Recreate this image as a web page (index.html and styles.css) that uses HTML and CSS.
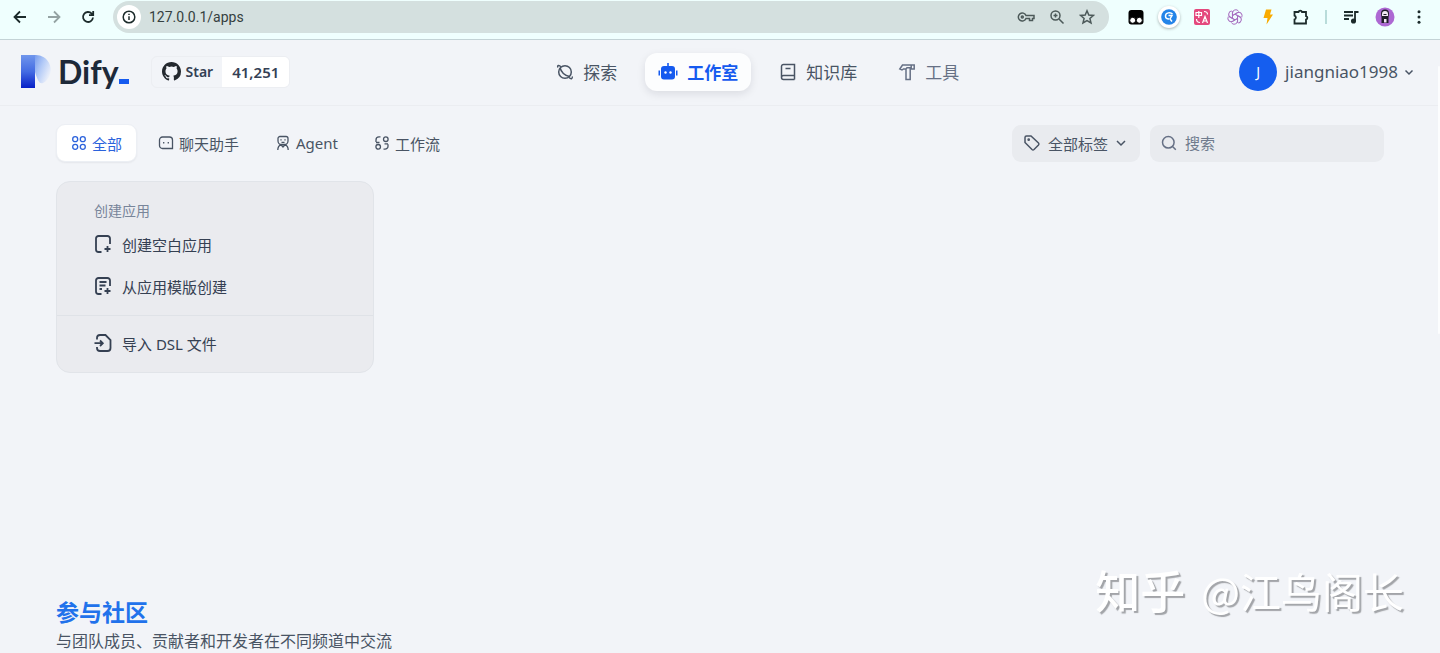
FILE: index.html
```
<!DOCTYPE html>
<html lang="zh-CN">
<head>
    <meta charset="UTF-8">
    <meta name="viewport" content="width=device-width, initial-scale=1.0">
    <title>工作室 - Dify</title>
    <link rel="stylesheet" href="styles.css">
</head>
<body>
    <!-- browser toolbar -->
    <div class="toolbar">
        <div class="nav-buttons">
            <button type="button" aria-label="Back"><svg width="16" height="16" viewBox="0 0 16 16"><path d="M14 8H3M8 2.500L2.500 8L8 13.500" /></svg></button>
            <button type="button" class="disabled" aria-label="Forward"><svg width="16" height="16" viewBox="0 0 16 16"><path d="M2 8h11M8 2.500L13.500 8L8 13.500" /></svg></button>
            <button type="button" aria-label="Reload"><svg width="16" height="16" viewBox="0 0 16 16"><path d="M13 8.500A5 5 0 1 1 11.700 4.600L13 6M13.200 2v4.200H9" /></svg></button>
        </div>
        <div class="address">
            <button type="button" class="site-info" aria-label="Site information"><svg width="16" height="16" viewBox="0 0 16 16"><circle cx="8" cy="8" r="5.800" /><path d="M8 7.300v3.700M8 4.700v1.400" /></svg></button>
            <input class="url" type="text" value="127.0.0.1/apps" aria-label="Address">
            <button type="button" aria-label="Passwords"><svg width="18" height="16" viewBox="0 0 18 16"><path d="M9 6.500h8v3h-1.500v2h-3v-2H9a4 4 0 1 1 0-3z" /><circle cx="5.300" cy="8" r="1" /></svg></button>
            <button type="button" aria-label="Zoom"><svg width="16" height="16" viewBox="0 0 16 16"><circle cx="6.500" cy="6.500" r="4.500" /><path d="M10 10l4.500 4.500M4.500 6.500h4M6.500 4.500v4" /></svg></button>
            <button type="button" aria-label="Bookmark"><svg width="16" height="16" viewBox="0 0 16 16"><path d="M8 1.800l1.800 4.200 4.600.4-3.500 3 1.100 4.500L8 11.500l-4 2.400 1.100-4.500-3.500-3 4.600-.4z" /></svg></button>
        </div>
        <div class="extensions">
            <button type="button" aria-label="Tampermonkey"><svg width="18" height="18" viewBox="0 0 18 18"><rect x="1.500" y="2" width="15" height="14.500" rx="3" fill="#000" stroke="none" /><circle cx="5.700" cy="12.300" r="3" fill="#fff" stroke="#000" stroke-width="1" /><circle cx="12.300" cy="12.300" r="3" fill="#fff" stroke="#000" stroke-width="1" /></svg></button>
            <button type="button" class="raised" aria-label="Copilot"><svg width="18" height="18" viewBox="0 0 18 18"><circle cx="9" cy="9" r="7.800" fill="#2484e8" stroke="none" /><path d="M12.500 6C10.500 3.800 5.500 4.500 5.500 8c0 2 1.500 3 3.500 3M8.500 7.500h3.500l-2 3.500 2 2.500" stroke="#fff" /></svg></button>
            <button type="button" aria-label="Translate"><svg width="18" height="18" viewBox="0 0 18 18"><rect x="1" y="1" width="16" height="16" rx="2" fill="#e4487d" stroke="none" /><path d="M3 4.500h5.500v3H3zM5.800 3v7M9.500 15l2.500-6.500 2.500 6.500M10.500 13h3M11 3.500c2.500 0 3.500 1 3.500 3M3.500 11c0 2.500 1 3.500 3.500 3.500" stroke="#fff" stroke-width="1.200" /></svg></button>
            <button type="button" aria-label="ChatGPT"><svg width="18" height="18" viewBox="0 0 18 18"><g stroke="#a76fc0" stroke-width="1"><path id="petal" d="M6.500 10.500V5a3.300 3.300 0 0 1 6.100-1.700M6.500 7.500l4.700-2.800a3 3 0 0 1 1.600-.4" /><use href="#petal" transform="rotate(60 9 9)" /><use href="#petal" transform="rotate(120 9 9)" /><use href="#petal" transform="rotate(180 9 9)" /><use href="#petal" transform="rotate(240 9 9)" /><use href="#petal" transform="rotate(300 9 9)" /></g></svg></button>
            <button type="button" aria-label="Lightning"><svg width="18" height="18" viewBox="0 0 18 18"><path d="M7 1.500h5.500l-1.500 5h3L7.500 16.500l1-6.500H4.500z" fill="#f9ab00" stroke="none" /></svg></button>
            <button type="button" aria-label="Extensions"><svg width="18" height="18" viewBox="0 0 18 18"><path d="M2.500 4h4a1.800 1.800 0 0 1 3.500 0h4v4a1.800 1.800 0 0 1 0 3.500v4h-11.500v-4a2 2 0 0 0 0-3.800z" stroke-width="1.800" /></svg></button>
            <span class="separator"></span>
            <button type="button" aria-label="Media"><svg width="18" height="18" viewBox="0 0 18 18"><path d="M2 4h9M2 7.500h9M2 11h5M13 13V4h3.500" stroke-width="1.800" /><circle cx="11.500" cy="13" r="1.800" fill="#1c2b2b" /></svg></button>
            <button type="button" aria-label="Profile"><svg width="20" height="20" viewBox="0 0 20 20"><circle cx="10" cy="10" r="9.500" fill="#ad68d3" stroke="none" /><path d="M6.500 16v-5.500L6 6.500a4 4 0 0 1 8 0l-.5 4V16z" fill="#211c2a" stroke="none" /><path d="M7 7a3 3 0 0 1 6 0v2H7zM9 12h2.500v3.500H9z" fill="#f3e8f4" stroke="none" /><path d="M8.500 7.500h3" stroke="#211c2a" stroke-width="1" /></svg></button>
            <button type="button" aria-label="Menu"><svg width="18" height="18" viewBox="0 0 18 18"><g fill="#1c2b2b" stroke="none"><circle cx="9" cy="3.800" r="1.500" /><circle cx="9" cy="9" r="1.500" /><circle cx="9" cy="14.200" r="1.500" /></g></svg></button>
        </div>
    </div>

    <header class="header">
        <div class="brand">
            <a class="logo" href="#" aria-label="Dify">
                <svg width="31" height="36" viewBox="0 0 31 36">
                    <defs>
                        <linearGradient id="stem" x1="0" y1="0" x2="0" y2="1"><stop offset="0" stop-color="#7096ec" /><stop offset="0.500" stop-color="#446ce3" /><stop offset="1" stop-color="#0720c7" /></linearGradient>
                        <linearGradient id="bowl" x1="0" y1="0" x2="1" y2="0.700"><stop offset="0" stop-color="#7399ed" /><stop offset="0.500" stop-color="#b4cbf7" /><stop offset="1" stop-color="#f0f3fa" /></linearGradient>
                    </defs>
                    <g stroke="none">
                        <path d="M14 1a15 15 0 0 1 9 28c-3 1-5-1-8-11z" fill="url(#bowl)" />
                        <path d="M1 1h14v33H1z" fill="url(#stem)" />
                    </g>
                </svg>
                <span class="logo-text">Dify<span class="cursor"></span></span>
            </a>
            <a class="github" href="#">
                <span class="star"><svg width="19" height="19" viewBox="0 0 16 16"><path d="M8 0C3.580 0 0 3.580 0 8c0 3.540 2.290 6.530 5.470 7.590.4.070.55-.17.55-.38 0-.19-.01-.82-.01-1.490-2.010.37-2.530-.49-2.690-.94-.09-.23-.48-.94-.82-1.130-.28-.15-.68-.52-.01-.53.63-.01 1.080.58 1.230.82.72 1.210 1.870.87 2.330.66.07-.52.28-.87.51-1.070-1.780-.2-3.640-.89-3.640-3.950 0-.87.31-1.590.82-2.150-.08-.2-.36-1.020.08-2.120 0 0 .67-.21 2.200.82a7.600 7.600 0 0 1 4 0c1.530-1.040 2.200-.82 2.200-.82.44 1.100.16 1.920.08 2.120.51.56.82 1.270.82 2.150 0 3.070-1.870 3.750-3.650 3.950.29.25.54.73.54 1.480 0 1.070-.01 1.930-.01 2.200 0 .21.15.46.55.38A8 8 0 0 0 16 8c0-4.420-3.580-8-8-8z" fill="#24292f" stroke="none" /></svg>Star</span>
                <span class="count">41,251</span>
            </a>
        </div>
        <nav class="main-nav">
            <a href="#"><svg width="18" height="18" viewBox="0 0 18 18"><circle cx="9" cy="9" r="6.300" /><path d="M5 3.800C3 1.800 1.200 2 1.800 4.500M4.200 5c.8 4 4.500 7.800 9.300 8.500M13 14.500c2 2 3.800 1.500 3.200-1" /></svg>探索</a>
            <a href="#" class="active"><svg width="20" height="20" viewBox="0 0 20 20"><path d="M9.200 1h1.600v3H14a3 3 0 0 1 3 3v7.500a3 3 0 0 1-3 3H6a3 3 0 0 1-3-3V7a3 3 0 0 1 3-3h3.200zM.5 8.500H2v5H.5zM18 8.500h1.500v5H18z" fill="#155aef" stroke="none" /><circle cx="7.500" cy="10.500" r="1.200" fill="#fff" stroke="none" /><circle cx="12.500" cy="10.500" r="1.200" fill="#fff" stroke="none" /></svg>工作室</a>
            <a href="#"><svg width="18" height="18" viewBox="0 0 18 18"><path d="M15.500 12.500v-11h-11a2 2 0 0 0-2 2v11a2 2 0 0 0 2 2h11M15.500 12.500h-11a2 2 0 0 0 0 4M15.500 12.500v4M6.500 5.500h5" /></svg>知识库</a>
            <a href="#" class="muted"><svg width="18" height="18" viewBox="0 0 18 18"><path d="M1.800 6L4.500 2h11.700v4h-4v10.500H8V6H5.500L4 7zM8 6l1-1.200h3.200V6M13.200 2v4" /></svg>工具</a>
        </nav>
        <button type="button" class="account">
            <span class="avatar">J</span>
            <span>jiangniao1998</span>
            <svg width="10" height="10" viewBox="0 0 10 10"><path d="M1.500 3.500L5 7l3.500-3.500" /></svg>
        </button>
    </header>

    <main class="content">
        <div class="filters">
            <div class="tabs">
                <button type="button" class="tab active"><svg width="16" height="16" viewBox="0 0 16 16"><circle cx="4.200" cy="4.200" r="2.500" /><circle cx="11.800" cy="4.200" r="2.500" /><circle cx="4.200" cy="11.800" r="2.500" /><circle cx="11.800" cy="11.800" r="2.500" /></svg>全部</button>
                <button type="button" class="tab"><svg width="16" height="16" viewBox="0 0 16 16"><path d="M4.500 2h7a3 3 0 0 1 3 3v8.500h-10a3 3 0 0 1-3-3V5a3 3 0 0 1 3-3zM5.700 7v1.500M10.300 7v1.500" /></svg>聊天助手</button>
                <button type="button" class="tab"><svg width="16" height="16" viewBox="0 0 16 16"><path d="M5 1.500h6a2 2 0 0 1 2 2V6a3.500 3.500 0 0 1-3.500 3.500h-3A3.500 3.500 0 0 1 3 6V3.500a2 2 0 0 1 2-2zM6 4.200v1.300M10 4.200v1.300M6.500 7.300h3M2.800 15c0-3 1.500-4.500 3.200-5.300l2 2.300 2-2.300c1.700.8 3.200 2.300 3.200 5.300" /></svg>Agent</button>
                <button type="button" class="tab"><svg width="16" height="16" viewBox="0 0 16 16"><circle cx="11.800" cy="4.200" r="2.300" /><circle cx="4.200" cy="11.800" r="2.300" /><path d="M6.500 1.900H5a3 3 0 0 0-3 3v2M5.500 7.500H2M9.500 14.200H11a3 3 0 0 0 3-3v-2M10.500 8.800H14" /></svg>工作流</button>
            </div>
            <div class="search-tools">
                <button type="button" class="tag-filter"><svg width="18" height="18" viewBox="0 0 18 18"><path d="M2 3.500A1.500 1.500 0 0 1 3.500 2H8l7.500 7a1.500 1.500 0 0 1 0 2L11 15.500a1.500 1.500 0 0 1-2 0L2 8.500z" /><circle cx="5.700" cy="5.700" r="0.600" /></svg>全部标签<svg width="12" height="12" viewBox="0 0 12 12"><path d="M2 4l4 4 4-4" /></svg></button>
                <label class="search"><svg width="16" height="16" viewBox="0 0 16 16"><circle cx="7.300" cy="7.300" r="5.800" /><path d="M11.500 11.500l3.300 3.300" /></svg><input type="text" placeholder="搜索" aria-label="搜索"></label>
            </div>
        </div>

        <section class="create-card">
            <div class="create-group">
                <h2>创建应用</h2>
                <button type="button"><svg width="18" height="18" viewBox="0 0 18 18"><path d="M7.500 17H4.500a2.500 2.500 0 0 1-2.500-2.500v-11A2.500 2.500 0 0 1 4.500 1h9A2.500 2.500 0 0 1 16 3.500V9M13.500 11v6M10.500 14h6" /></svg>创建空白应用</button>
                <button type="button"><svg width="18" height="18" viewBox="0 0 18 18"><path d="M7.500 17H4.500a2.500 2.500 0 0 1-2.500-2.500v-11A2.500 2.500 0 0 1 4.500 1h9A2.500 2.500 0 0 1 16 3.500V9M13.500 11v6M10.500 14h6M5.500 5h7M5.500 8.500h6M5.500 12h2.500" /></svg>从应用模版创建</button>
            </div>
            <div class="import-group">
                <button type="button"><svg width="18" height="18" viewBox="0 0 18 18"><path d="M3 5.500V4a3 3 0 0 1 3-3h5.500L16.500 6v8a3 3 0 0 1-3 3H6a3 3 0 0 1-3-3v-1M.5 9.200h8M6 6.500l2.800 2.700L6 12" /></svg>导入 DSL 文件</button>
            </div>
        </section>

        <footer class="community">
            <h2>参与社区</h2>
            <p>与团队成员、贡献者和开发者在不同频道中交流</p>
        </footer>
    </main>
    <div class="scroll-thumb"></div>
    <div class="watermark"><span class="site">知乎</span><span>@江鸟阁长</span></div>
</body>
</html>
```

FILE: styles.css
```
* {
    box-sizing: border-box;
}
body {
    display: flex;
    flex-direction: column;
    min-height: 100vh;
    margin: 0;
    background-color: #f2f4f8;
    color: #495464;
    font-family: "Noto Sans", "Noto Sans CJK SC", sans-serif;
    font-size: 15px;
}
button,
input {
    padding: 0;
    border: none;
    background: none;
    color: inherit;
    font: inherit;
}
button {
    display: flex;
    align-items: center;
    cursor: pointer;
}
a {
    color: inherit;
    text-decoration: none;
}
h2,
p {
    margin: 0;
}
svg {
    flex: none;
    fill: none;
    stroke: currentColor;
    stroke-width: 1.5;
}

/* browser toolbar */
.toolbar {
    display: flex;
    align-items: center;
    height: 40px;
    padding: 0 12px 6px;
    border-bottom: 1px solid #c3d3d6;
    background-color: #effffe;
    color: #1c2b2b;
}
.nav-buttons {
    display: flex;
    gap: 18px;
    margin-right: 17px;
}
.nav-buttons svg {
    stroke-width: 1.8;
}
.nav-buttons .disabled {
    color: #94a3a3;
}
.address {
    display: flex;
    flex: 1;
    align-items: center;
    gap: 14px;
    height: 32px;
    padding: 0 14px 0 4px;
    border-radius: 16px;
    background-color: #d4e0df;
    color: #4c5959;
}
.site-info {
    justify-content: center;
    width: 24px;
    height: 24px;
    border-radius: 50%;
    background-color: #fff;
    color: #1c2b2b;
}
.url {
    flex: 1;
    margin-left: -6px;
    color: #354040;
    font-family: Roboto, sans-serif;
    font-size: 14px;
}
.extensions {
    display: flex;
    align-items: center;
    gap: 15px;
    margin-left: 18px;
}
.raised {
    margin: 0 -2px;
    padding: 2px;
    border-radius: 50%;
    background-color: #fff;
    box-shadow: 0 1px 3px rgba(0, 0, 0, 0.3);
}
.separator {
    width: 2px;
    height: 14px;
    background-color: #b8dcda;
}

/* header */
.header {
    display: flex;
    align-items: center;
    justify-content: space-between;
    height: 66px;
    padding: 0 26px 2px 20px;
    border-bottom: 1px solid #ebedf1;
}
.brand,
.logo,
.github,
.star {
    display: flex;
    align-items: center;
}
.brand {
    gap: 22px;
}
.logo {
    gap: 7px;
}
.logo-text {
    display: flex;
    align-items: baseline;
    color: #1d2939;
    font-family: Lato, sans-serif;
    font-size: 32px;
    font-weight: bold;
    line-height: 36px;
}
.cursor {
    width: 10px;
    height: 5px;
    background-color: #155aef;
}
.github {
    overflow: hidden;
    border: 1px solid #eceef2;
    border-radius: 6px;
    color: #344054;
    font-size: 14px;
    font-weight: 600;
    line-height: 30px;
}
.star {
    gap: 5px;
    padding: 0 9px 0 10px;
}
.count {
    padding: 0 10px;
    background-color: #fff;
    font-size: 15px;
}
.main-nav {
    display: flex;
    gap: 15px;
    margin-right: 14px;
    font-size: 17px;
}
.main-nav a {
    display: flex;
    align-items: center;
    gap: 9px;
    height: 38px;
    padding: 0 13px;
    border-radius: 12px;
}
.main-nav .active {
    background-color: #fcfdfe;
    box-shadow: 0 3px 8px rgba(16, 24, 40, 0.1);
    color: #155aef;
    font-weight: bold;
}
.main-nav .muted {
    color: #667085;
}
.account {
    gap: 6px;
    font-size: 17px;
}
.avatar {
    width: 38px;
    margin-right: 2px;
    border-radius: 50%;
    background-color: #155eef;
    color: #fff;
    font-size: 14px;
    line-height: 38px;
}

/* app list */
.content {
    display: flex;
    flex: 1;
    flex-direction: column;
    padding: 18px 56px 0;
}
.filters,
.tabs,
.search-tools {
    display: flex;
    align-items: center;
}
.filters {
    justify-content: space-between;
}
.tabs {
    gap: 6px;
}
.tab {
    gap: 5px;
    height: 38px;
    padding: 0 14px;
    border: 1px solid transparent;
    border-radius: 9px;
}
.tab svg {
    stroke-width: 1.3;
}
.tab.active {
    border-color: #eceff4;
    background-color: #fff;
    box-shadow: 0 1px 2px rgba(16, 24, 40, 0.06);
    color: #2b62dc;
}
.search-tools {
    gap: 10px;
}
.tag-filter,
.search {
    height: 37px;
    border-radius: 9px;
    background-color: #e9ebef;
}
.tag-filter {
    gap: 7px;
    padding: 0 13px 0 11px;
}
.search {
    display: flex;
    align-items: center;
    gap: 8px;
    width: 234px;
    padding: 0 11px;
    color: #667085;
}
.search input {
    flex: 1;
    min-width: 0;
    outline: none;
}
.search input::placeholder {
    color: #6f7b8d;
}
.create-card {
    width: 318px;
    margin-top: 19px;
    border: 1px solid #e1e4e9;
    border-radius: 14px;
    background-color: #eaebef;
    color: #354052;
}
.create-group {
    padding: 19px 37px 8px;
}
.create-group h2 {
    color: #78859a;
    font-size: 14px;
    font-weight: normal;
    line-height: 20px;
}
.create-card button {
    gap: 10px;
    height: 42px;
}
.create-card svg {
    stroke-width: 1.8;
}
.create-group h2 + button {
    margin-top: 2px;
}
.import-group {
    padding: 6px 37px 8px;
    border-top: 1px solid #dfe2e7;
}
.community {
    margin-top: auto;
}
.community h2 {
    color: #2172eb;
    font-size: 23px;
    line-height: 34px;
}
.community p {
    font-size: 16px;
    line-height: 24px;
}

/* overlays */
.scroll-thumb {
    position: fixed;
    top: 66px;
    right: 0;
    width: 2px;
    height: 41vh;
    border-radius: 2px;
    background-color: #fcfdfe;
}
.watermark {
    position: fixed;
    right: 36px;
    bottom: 37px;
    display: flex;
    align-items: center;
    gap: 16px;
    color: #fff;
    font-family: "Noto Sans CJK SC", sans-serif;
    font-size: 41px;
    line-height: 52px;
    text-shadow: 2px 2px 1px #a2a4a8;
}
.watermark .site {
    font-size: 45px;
    font-weight: 500;
}
```
